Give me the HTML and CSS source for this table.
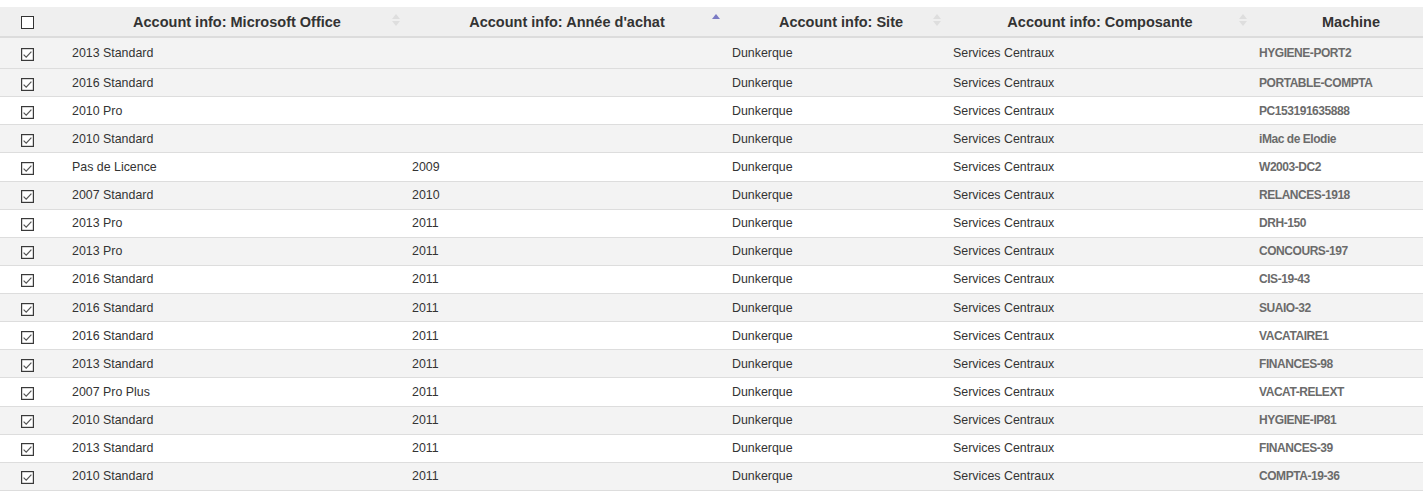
FILE: index.html
```html
<!DOCTYPE html>
<html lang="fr">
<head>
<meta charset="utf-8">
<title>Accounts</title>
<link rel="stylesheet" href="styles.css">
</head>
<body>
<table class="grid">
  <colgroup>
    <col class="c-check"><col class="c-office"><col class="c-year"><col class="c-site"><col class="c-comp"><col class="c-machine">
  </colgroup>
  <thead>
    <tr>
      <th class="h-check"><span class="box"></span></th>
      <th class="h h1">Account info: Microsoft Office<span class="sort"><i class="up"></i><i class="down"></i></span></th>
      <th class="h h2">Account info: Année d'achat<span class="sort"><i class="up active"></i></span></th>
      <th class="h h3">Account info: Site<span class="sort"><i class="up"></i><i class="down"></i></span></th>
      <th class="h h4">Account info: Composante<span class="sort"><i class="up"></i><i class="down"></i></span></th>
      <th class="h h5">Machine</th>
    </tr>
  </thead>
  <tbody id="rows">
  </tbody>
</table>
<script src="app.js"></script>
</body>
</html>
```

FILE: styles.css
```css
html, body {
  margin: 0;
  padding: 0;
  background: #ffffff;
}
body {
  font-family: "Liberation Sans", Arial, sans-serif;
  color: #333333;
  overflow: hidden;
}
.grid {
  width: 100%;
  margin-top: 7px;
  border-collapse: collapse;
  table-layout: fixed;
}
.c-check { width: 62px; }
.c-office { width: 340px; }
.c-year { width: 320px; }
.c-site { width: 221px; }
.c-comp { width: 306px; }
.c-machine { width: auto; }

thead th {
  background: #efefef;
  height: 29px;
  padding: 0;
  border-bottom: 2px solid #dcdcdc;
  font-size: 14.5px;
  font-weight: bold;
  color: #333333;
  text-align: center;
  position: relative;
  white-space: nowrap;
}
.h-check { text-align: left; }
.h-check .box {
  display: block;
  margin-left: 21px;
  margin-top: 1px;
  width: 11px;
  height: 11px;
  border: 1.5px solid #333;
  background: #fff;
}
.h1 { padding: 0 10px 0 20px; }
.h2 { padding: 0 10px 0 20px; }
.h3 { padding: 0 10px 0 27px; }
.h4 { padding: 0 10px 0 18px; }
.h5 { padding: 0 10px 0 40px; }

.sort {
  position: absolute;
  right: 2px;
  top: 7px;
  width: 8px;
  height: 14px;
}
.sort i {
  position: absolute;
  left: 0;
  width: 0;
  height: 0;
  border-left: 4px solid transparent;
  border-right: 4px solid transparent;
}
.sort .up {
  top: 0;
  border-bottom: 5px solid #dedede;
}
.sort .down {
  top: 7px;
  border-top: 5px solid #dedede;
}
.sort .up.active {
  border-bottom-color: #7b7bc4;
}

tbody td {
  height: 27.14px;
  padding: 0 0 0 10px;
  border-bottom: 1px solid #dddddd;
  font-size: 12.4px;
  color: #333333;
  white-space: nowrap;
  overflow: hidden;
}
tbody tr:first-child td { height: 30px; }
tbody tr:nth-child(even) td { background: #f3f3f3; }
tbody tr:nth-child(odd) td { background: #ffffff; }
tbody tr.hover td { background: #f3f3f3; }

tbody td.check {
  padding: 0 0 0 21px;
}
.check svg {
  display: block;
  margin-top: 3px;
}
tbody td.machine {
  font-weight: bold;
  font-size: 12px;
  letter-spacing: -0.45px;
  color: #6b6b6b;
}
```

FILE: app.js
```js
var data = [
  ["2013 Standard", "", "HYGIENE-PORT2"],
  ["2016 Standard", "", "PORTABLE-COMPTA"],
  ["2010 Pro", "", "PC153191635888"],
  ["2010 Standard", "", "iMac de Elodie"],
  ["Pas de Licence", "2009", "W2003-DC2"],
  ["2007 Standard", "2010", "RELANCES-1918"],
  ["2013 Pro", "2011", "DRH-150"],
  ["2013 Pro", "2011", "CONCOURS-197"],
  ["2016 Standard", "2011", "CIS-19-43"],
  ["2016 Standard", "2011", "SUAIO-32"],
  ["2016 Standard", "2011", "VACATAIRE1"],
  ["2013 Standard", "2011", "FINANCES-98"],
  ["2007 Pro Plus", "2011", "VACAT-RELEXT"],
  ["2010 Standard", "2011", "HYGIENE-IP81"],
  ["2013 Standard", "2011", "FINANCES-39"],
  ["2010 Standard", "2011", "COMPTA-19-36"]
];
var box = '<svg width="13" height="13" viewBox="0 0 13 13"><rect x="0.6" y="0.6" width="11.8" height="11.8" fill="#fff" stroke="#3a3a3a" stroke-width="1.2"/><path d="M2.6 6.6 L5.2 9.2 L10.4 3.6" fill="none" stroke="#555" stroke-width="1.2"/></svg>';
var tb = document.getElementById("rows");
var html = "";
data.forEach(function (r, i) {
  html += '<tr' + (i === 0 ? ' class="hover"' : '') + '>' +
    '<td class="check">' + box + '</td>' +
    '<td>' + r[0] + '</td>' +
    '<td>' + r[1] + '</td>' +
    '<td>Dunkerque</td>' +
    '<td>Services Centraux</td>' +
    '<td class="machine">' + r[2] + '</td></tr>';
});
tb.innerHTML = html;
```
